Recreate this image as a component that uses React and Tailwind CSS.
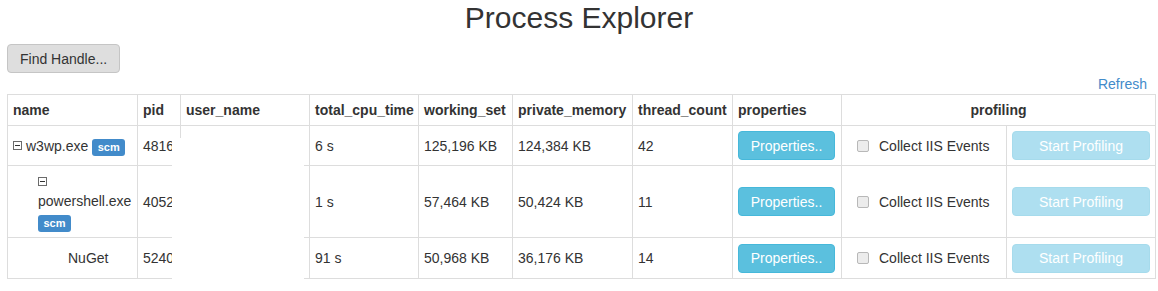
import React from 'react';

const rows = [
  { key: 'w3wp', pid: '4816', cpu: '6 s', ws: '125,196 KB', pm: '124,384 KB', tc: '42' },
  { key: 'powershell', pid: '4052', cpu: '1 s', ws: '57,464 KB', pm: '50,424 KB', tc: '11' },
  { key: 'nuget', pid: '5240', cpu: '91 s', ws: '50,968 KB', pm: '36,176 KB', tc: '14' },
];

function CollapseIcon() {
  return (
    <svg width="9" height="9" viewBox="0 0 9 9" className="shrink-0">
      <rect x="0.5" y="0.5" width="8" height="8" fill="#fff" stroke="#6b6b6b" />
      <line x1="2" y1="4.5" x2="7" y2="4.5" stroke="#333" />
    </svg>
  );
}

function Badge() {
  return (
    <span className="inline-flex h-[17px] w-[33px] items-center justify-center rounded-[3px] bg-[#428bca] text-[11px] font-bold leading-none text-white">
      scm
    </span>
  );
}

function NameCell({ kind }) {
  if (kind === 'w3wp') {
    return (
      <div className="flex items-center">
        <CollapseIcon />
        <span className="ml-[4px]">w3wp.exe</span>
        <span className="ml-[4px]">
          <Badge />
        </span>
      </div>
    );
  }
  if (kind === 'powershell') {
    return (
      <div className="pl-[25px]">
        <div className="flex h-[20px] items-center">
          <CollapseIcon />
        </div>
        <div className="h-[20px]">powershell.exe</div>
        <div className="flex h-[21px] items-end">
          <Badge />
        </div>
      </div>
    );
  }
  return <div className="flex h-[30px] items-center pl-[55px]">NuGet</div>;
}

const th = 'border border-[#ddd] p-[5px] font-bold align-middle';
const td = 'border border-[#ddd] p-[5px] align-middle';

export default function App() {
  return (
    <div
      className="relative w-[1158px] bg-white text-[14px] leading-[20px] text-[#333]"
      style={{ fontFamily: '"Liberation Sans", Arial, sans-serif' }}
    >
      <h1 className="text-center text-[30px] font-normal leading-[36px]">Process Explorer</h1>

      <div className="mt-[8px] px-[7px]">
        <button className="flex h-[29px] items-center rounded-[4px] border border-[#c5c5c5] bg-[#dedede] px-[12px] text-[#333]">
          Find Handle...
        </button>
      </div>

      <div className="flex h-[21px] justify-end pr-[11px] pt-[1px]">
        <span className="text-[#428bca]">Refresh</span>
      </div>

      <div className="pl-[7px]">
        <table className="w-[1148px] table-fixed border-collapse border border-[#ddd]">
          <colgroup>
            <col className="w-[130px]" />
            <col className="w-[43px]" />
            <col className="w-[129px]" />
            <col className="w-[109px]" />
            <col className="w-[94px]" />
            <col className="w-[120px]" />
            <col className="w-[100px]" />
            <col className="w-[109px]" />
            <col className="w-[165px]" />
            <col className="w-[149px]" />
          </colgroup>
          <thead>
            <tr>
              <th className={th + ' text-left'}>name</th>
              <th className={th + ' text-left'}>pid</th>
              <th className={th + ' text-left'}>user_name</th>
              <th className={th + ' text-left'}>total_cpu_time</th>
              <th className={th + ' text-left'}>working_set</th>
              <th className={th + ' text-left'}>private_memory</th>
              <th className={th + ' text-left'}>thread_count</th>
              <th className={th + ' text-left'}>properties</th>
              <th colSpan={2} className={th + ' text-center'}>
                profiling
              </th>
            </tr>
          </thead>
          <tbody>
            {rows.map((r) => (
              <tr key={r.key}>
                <td className={td}>
                  <NameCell kind={r.key} />
                </td>
                <td className={td + ' overflow-hidden whitespace-nowrap'}>{r.pid}</td>
                <td className={td}></td>
                <td className={td}>{r.cpu}</td>
                <td className={td}>{r.ws}</td>
                <td className={td}>{r.pm}</td>
                <td className={td}>{r.tc}</td>
                <td className={td}>
                  <button className="flex h-[29px] w-[97px] items-center justify-center rounded-[4px] border border-[#46b8da] bg-[#5bc0de] text-white">
                    Properties..
                  </button>
                </td>
                <td className={td}>
                  <div className="flex items-center pl-[10px]">
                    <span className="h-[12px] w-[12px] rounded-[2px] border border-[#b8b8b8] bg-[#ececec]" />
                    <span className="ml-[10px]">Collect IIS Events</span>
                  </div>
                </td>
                <td className={td}>
                  <button className="flex h-[29px] w-full items-center justify-center rounded-[4px] border border-[#a6dbec] bg-[#aedff0] text-white">
                    Start Profiling
                  </button>
                </td>
              </tr>
            ))}
          </tbody>
        </table>
      </div>

      {/* redacted user names */}
      <div className="absolute left-[172px] top-[138px] h-[153px] w-[132px] bg-white" />
    </div>
  );
}
